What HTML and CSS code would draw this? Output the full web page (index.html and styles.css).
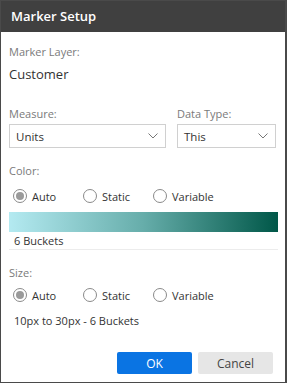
FILE: index.html
```html
<!DOCTYPE html>
<html lang="en">
<head>
    <meta charset="UTF-8">
    <title>Marker Setup</title>
    <link rel="stylesheet" href="styles.css">
</head>
<body>
    <div class="dialog">
        <div class="dialog-header">Marker Setup</div>
        <div class="dialog-body">
            <div class="label first">Marker Layer:</div>
            <div class="value">Customer</div>

            <div class="row">
                <div class="field measure">
                    <div class="label">Measure:</div>
                    <div class="select">
                        <span>Units</span>
                        <svg class="chevron" width="10" height="6" viewBox="0 0 10 6"><path d="M0.5 0.5 L5 5 L9.5 0.5" fill="none" stroke="#777" stroke-width="1"/></svg>
                    </div>
                </div>
                <div class="field datatype">
                    <div class="label">Data Type:</div>
                    <div class="select">
                        <span>This</span>
                        <svg class="chevron" width="10" height="6" viewBox="0 0 10 6"><path d="M0.5 0.5 L5 5 L9.5 0.5" fill="none" stroke="#777" stroke-width="1"/></svg>
                    </div>
                </div>
            </div>

            <div class="label section">Color:</div>
            <div class="radios">
                <label class="radio checked"><span class="dot"></span>Auto</label>
                <label class="radio"><span class="dot"></span>Static</label>
                <label class="radio"><span class="dot"></span>Variable</label>
            </div>
            <div class="gradient"></div>
            <div class="buckets">6 Buckets</div>

            <div class="label section size">Size:</div>
            <div class="radios size-radios">
                <label class="radio checked"><span class="dot"></span>Auto</label>
                <label class="radio"><span class="dot"></span>Static</label>
                <label class="radio"><span class="dot"></span>Variable</label>
            </div>
            <div class="range">10px to 30px - 6 Buckets</div>

            <div class="actions">
                <button class="btn primary">OK</button>
                <button class="btn">Cancel</button>
            </div>
        </div>
    </div>
</body>
</html>
```

FILE: styles.css
```css
body {
    margin: 0;
    font-family: "Open Sans", sans-serif;
    background: #fff;
}
.dialog {
    width: 287px;
    height: 383px;
    box-sizing: border-box;
    border: 1px solid #4a4a4a;
    border-right-width: 2px;
    background: #fff;
}
.dialog-header {
    height: 31px;
    background: #404040;
    color: #fff;
    font-size: 13px;
    font-weight: 600;
    line-height: 31px;
    padding-left: 10px;
}
.dialog-body {
    padding: 0 8px;
}
.label {
    font-size: 11px;
    line-height: 15px;
    color: #7a7a7a;
}
.label.first {
    margin-top: 12px;
}
.value {
    font-size: 13px;
    line-height: 18px;
    color: #333;
    margin-top: 6px;
}
.row {
    display: flex;
    gap: 11px;
    margin-top: 23px;
}
.field.measure {
    width: 157px;
}
.field.datatype {
    width: 99px;
}
.select {
    margin-top: 3px;
    height: 24px;
    box-sizing: border-box;
    border: 1px solid #d0d0d0;
    display: flex;
    align-items: center;
    justify-content: space-between;
    padding: 0 7px 0 6px;
    font-size: 11.5px;
    color: #333;
}
.label.section {
    margin-top: 15px;
}
.label.size {
    margin-top: 15px;
}
.radios {
    display: flex;
    margin-top: 10px;
    height: 16px;
    align-items: center;
}
.size-radios {
    margin-top: 7px;
}
.radio {
    display: flex;
    align-items: center;
    width: 70px;
    box-sizing: border-box;
    font-size: 11px;
    color: #333;
    padding-left: 4px;
}
.dot {
    width: 14px;
    height: 14px;
    box-sizing: border-box;
    border: 1px solid #8a8a8a;
    border-radius: 50%;
    margin-right: 5px;
    position: relative;
}
.radio.checked .dot::after {
    content: "";
    position: absolute;
    left: 2px;
    top: 2px;
    width: 8px;
    height: 8px;
    border-radius: 50%;
    background: #9a9a9a;
}
.gradient {
    margin-top: 8px;
    height: 20px;
    width: 269px;
    background: linear-gradient(to right, #b4eaf1, #66adaa 50%, #005748);
}
.buckets {
    font-size: 11px;
    line-height: 17px;
    color: #333;
    padding-left: 5px;
    width: 264px;
    border-bottom: 1px solid #ececec;
}
.range {
    font-size: 11px;
    line-height: 17px;
    color: #333;
    padding-left: 5px;
    margin-top: 9px;
}
.actions {
    display: flex;
    justify-content: flex-end;
    gap: 6px;
    margin-top: 23px;
    padding-right: 4px;
}
.btn {
    width: 75px;
    height: 22px;
    border: none;
    border-radius: 2px;
    background: #e6e6e6;
    color: #444;
    font-family: "Open Sans", sans-serif;
    font-size: 12px;
    padding: 0;
}
.btn.primary {
    background: #0a74e3;
    color: #fff;
}
```
